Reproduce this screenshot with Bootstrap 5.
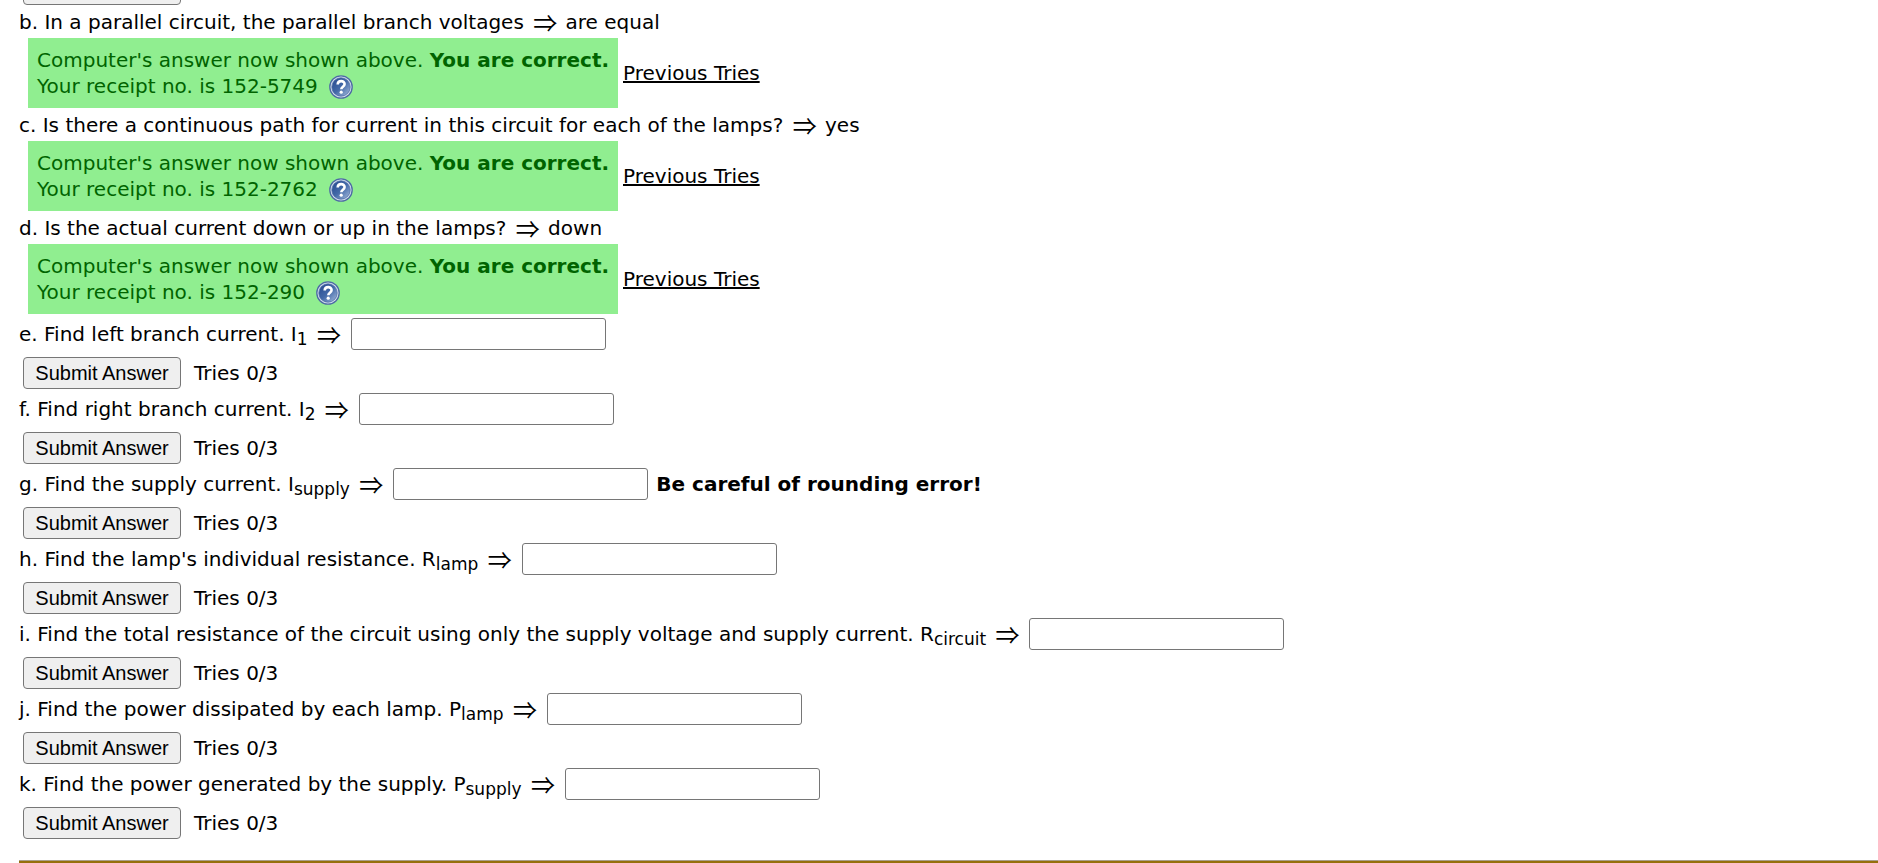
<!DOCTYPE html>
<html lang="en">
<head>
<meta charset="utf-8">
<meta name="viewport" content="width=device-width, initial-scale=1">
<title>Parallel circuit problem</title>
<link href="https://cdn.jsdelivr.net/npm/bootstrap@5.3.0/dist/css/bootstrap.min.css" rel="stylesheet">
<style>
  body { font: 20px/26px Verdana, "DejaVu Sans", sans-serif; color: #000; overflow-x: hidden; }
  .problem { margin-top: -27px; padding-left: 19px; }
  .question { height: 29px; white-space: nowrap; }
  .question sub { font-size: 17px; line-height: 0; }
  .arrow { font-family: "Noto Sans CJK JP", sans-serif; font-size: 24px; line-height: 0; vertical-align: -3px; margin: 0 2px 0 3px; }
  .graded { padding-left: 9px; margin-bottom: 4px; column-gap: 5px; }
  .verdict { width: 590px; height: 70px; padding: 9px; background: #90ee90; color: #006400; white-space: nowrap; }
  .verdict svg { vertical-align: -6px; margin-left: 5px; }
  .entry { height: 39px; line-height: 32px; column-gap: 8px; }
  .answer { width: 255px; height: 32px; border: 1px solid #767676; border-radius: 3px; padding: 1px 2px; }
  .submit-row { height: 36px; line-height: 32px; padding-left: 4px; column-gap: 13px; }
  .submit-btn { width: 158px; height: 32px; border: 1px solid #767676; border-radius: 4px; background: #efefef; color: #000; font: 20px/28px "Liberation Sans", Arial, sans-serif; padding: 0; white-space: nowrap; }
  .rule { height: 3px; background: #966f0c; border-top: 1px solid #aaa08c; margin-top: 17px; }
</style>
</head>
<body>
<svg width="0" height="0" class="position-absolute" aria-hidden="true">
  <defs>
    <linearGradient id="ball" x1="0" y1="0" x2="1" y2="1"><stop offset="0" stop-color="#24488c"/><stop offset=".5" stop-color="#4369a8"/><stop offset="1" stop-color="#a9bfdf"/></linearGradient>
    <symbol id="help" viewBox="0 0 24 24">
      <circle cx="12" cy="12" r="11.2" fill="#d3deee" stroke="#4d6ba3" stroke-width="1.3"/>
      <circle cx="12" cy="12" r="9.2" fill="url(#ball)" stroke="#4a69a5" stroke-width=".7"/>
      <path d="M8.7 9.6c0-4.6 6.9-4.4 6.9-.6 0 2.7-3.3 2.6-3.3 5.3" fill="none" stroke="#fff" stroke-width="2.6"/>
      <circle cx="12.2" cy="17.2" r="1.6" fill="#fff"/>
    </symbol>
  </defs>
</svg>
<main class="problem">
  <div class="submit-row d-flex align-items-start"><button type="button" class="submit-btn" aria-label="Submit"></button></div>

  <div class="question">b. In a parallel circuit, the parallel branch voltages <span class="arrow">⇒</span> are equal</div>
  <div class="graded d-flex align-items-center">
    <div class="verdict">Computer's answer now shown above. <b>You are correct.</b><br>Your receipt no. is 152-5749 <a href="#" aria-label="Help"><svg width="24" height="24"><use href="#help"/></svg></a></div>
    <a href="#" class="text-black">Previous Tries</a>
  </div>
  <div class="question">c. Is there a continuous path for current in this circuit for each of the lamps? <span class="arrow">⇒</span> yes</div>
  <div class="graded d-flex align-items-center">
    <div class="verdict">Computer's answer now shown above. <b>You are correct.</b><br>Your receipt no. is 152-2762 <a href="#" aria-label="Help"><svg width="24" height="24"><use href="#help"/></svg></a></div>
    <a href="#" class="text-black">Previous Tries</a>
  </div>
  <div class="question">d. Is the actual current down or up in the lamps? <span class="arrow">⇒</span> down</div>
  <div class="graded d-flex align-items-center">
    <div class="verdict">Computer's answer now shown above. <b>You are correct.</b><br>Your receipt no. is 152-290 <a href="#" aria-label="Help"><svg width="24" height="24"><use href="#help"/></svg></a></div>
    <a href="#" class="text-black">Previous Tries</a>
  </div>

  <div class="question entry d-flex align-items-start"><label for="e">e. Find left branch current. I<sub>1</sub> <span class="arrow">⇒</span></label><input id="e" type="text" class="answer"></div>
  <div class="submit-row d-flex align-items-start"><button type="button" class="submit-btn">Submit Answer</button><span>Tries 0/3</span></div>
  <div class="question entry d-flex align-items-start"><label for="f">f. Find right branch current. I<sub>2</sub> <span class="arrow">⇒</span></label><input id="f" type="text" class="answer"></div>
  <div class="submit-row d-flex align-items-start"><button type="button" class="submit-btn">Submit Answer</button><span>Tries 0/3</span></div>
  <div class="question entry d-flex align-items-start"><label for="g">g. Find the supply current. I<sub>supply</sub> <span class="arrow">⇒</span></label><input id="g" type="text" class="answer"><b>Be careful of rounding error!</b></div>
  <div class="submit-row d-flex align-items-start"><button type="button" class="submit-btn">Submit Answer</button><span>Tries 0/3</span></div>
  <div class="question entry d-flex align-items-start"><label for="h">h. Find the lamp's individual resistance. R<sub>lamp</sub> <span class="arrow">⇒</span></label><input id="h" type="text" class="answer"></div>
  <div class="submit-row d-flex align-items-start"><button type="button" class="submit-btn">Submit Answer</button><span>Tries 0/3</span></div>
  <div class="question entry d-flex align-items-start"><label for="i">i. Find the total resistance of the circuit using only the supply voltage and supply current. R<sub>circuit</sub> <span class="arrow">⇒</span></label><input id="i" type="text" class="answer"></div>
  <div class="submit-row d-flex align-items-start"><button type="button" class="submit-btn">Submit Answer</button><span>Tries 0/3</span></div>
  <div class="question entry d-flex align-items-start"><label for="j">j. Find the power dissipated by each lamp. P<sub>lamp</sub> <span class="arrow">⇒</span></label><input id="j" type="text" class="answer"></div>
  <div class="submit-row d-flex align-items-start"><button type="button" class="submit-btn">Submit Answer</button><span>Tries 0/3</span></div>
  <div class="question entry d-flex align-items-start"><label for="k">k. Find the power generated by the supply. P<sub>supply</sub> <span class="arrow">⇒</span></label><input id="k" type="text" class="answer"></div>
  <div class="submit-row d-flex align-items-start"><button type="button" class="submit-btn">Submit Answer</button><span>Tries 0/3</span></div>
  <div class="rule"></div>
</main>
<script src="https://cdn.jsdelivr.net/npm/bootstrap@5.3.0/dist/js/bootstrap.bundle.min.js"></script>
</body>
</html>
